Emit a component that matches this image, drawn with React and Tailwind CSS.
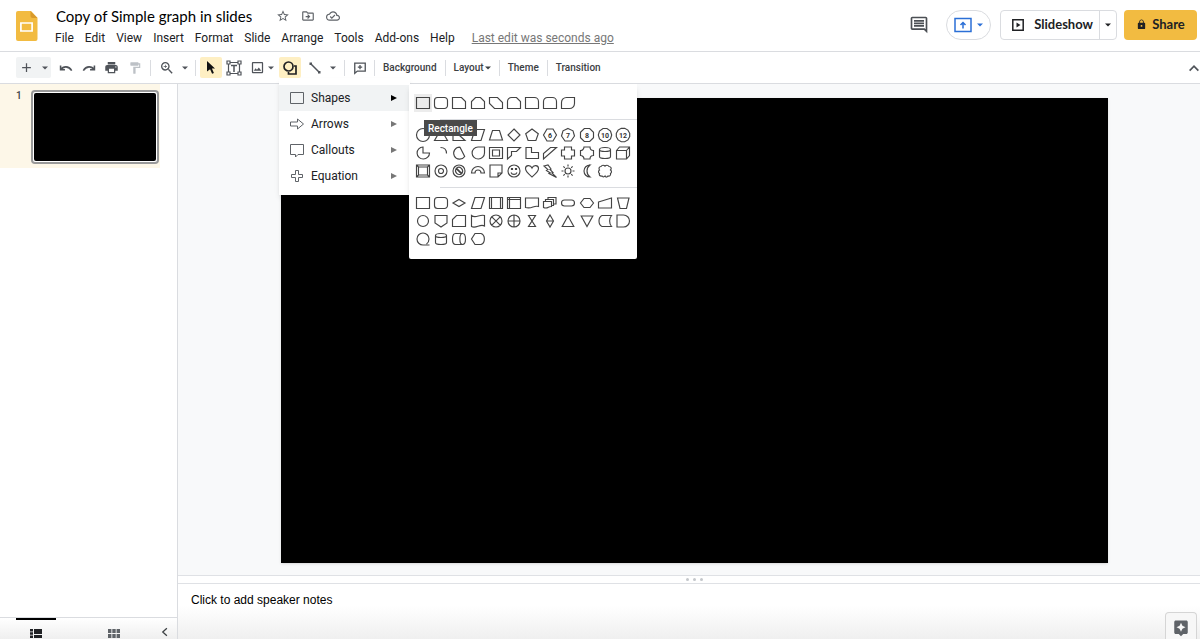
import React, { useState } from 'react';
import {
  MdAdd,
  MdAssistant,
  MdFormatPaint,
  MdLock,
  MdOutlineCloudDone,
  MdOutlineDriveFileMove,
  MdOutlineImage,
  MdOutlineInsertComment,
  MdPrint,
  MdStarBorder,
  MdZoomIn
} from 'react-icons/md';

const MENUS = ['File', 'Edit', 'View', 'Insert', 'Format', 'Slide', 'Arrange', 'Tools', 'Add-ons', 'Help'];

const RECT = 'M2.5 3.5h13v11h-13z';
const ROUND_RECT = 'M5.5 3.5h7a3 3 0 0 1 3 3v5a3 3 0 0 1-3 3h-7a3 3 0 0 1-3-3v-5a3 3 0 0 1 3-3z';
const PARALLELOGRAM = 'M6 3.5h9.5l-3.5 11H2.5z';
const CIRCLE = 'M9 3a6 6 0 1 1 0 12a6 6 0 0 1 0-12z';
const OCTAGON = 'M6.3 2.5h5.4l3.8 3.8v5.4l-3.8 3.8H6.3l-3.8-3.8V6.3z';
const CAN = 'M3.5 5.5c0-2.7 11-2.7 11 0v7c0 2.7-11 2.7-11 0zM3.5 5.5c0 2.7 11 2.7 11 0';

// Each entry: [name, outline, optional number drawn inside]
const SHAPE_GROUPS = [
  [
    ['Rectangle', RECT],
    ['Rounded rectangle', ROUND_RECT],
    ['Snip single corner', 'M2.5 3.5h9l4 4v7h-13z'],
    ['Snip same-side corners', 'M6.5 3.5h5l4 4v7h-13v-7z'],
    ['Snip diagonal corners', 'M2.5 3.5h8l5 5v6h-8l-5-5z'],
    ['Snip and round corner', 'M6.5 3.5h5l4 4v7h-13v-7a4 4 0 0 1 4-4z'],
    ['Round single corner', 'M2.5 3.5h9a4 4 0 0 1 4 4v7h-13z'],
    ['Round same-side corners', 'M6.5 3.5h5a4 4 0 0 1 4 4v7h-13v-7a4 4 0 0 1 4-4z'],
    ['Round diagonal corners', 'M7.5 3.5h8v6a5 5 0 0 1-5 5h-8v-6a5 5 0 0 1 5-5z']
  ],
  [
    ['Ellipse', 'M9 2.5a6.5 6.5 0 1 1 0 13a6.5 6.5 0 0 1 0-13z'],
    ['Triangle', 'M9 3.5l6.5 11h-13z'],
    ['Right triangle', 'M3 3.5l12 11H3z'],
    ['Parallelogram', PARALLELOGRAM],
    ['Trapezoid', 'M5.500 4.500h7l3 9.500h-13z'],
    ['Diamond', 'M9 3l6 6l-6 6l-6-6z'],
    ['Pentagon', 'M9 3l6.3 4.7l-2.4 6.800H5.100L2.700 7.700z'],
    ['Hexagon', 'M6 3h6l3.500 6l-3.500 6H6L2.500 9z', '6'],
    ['Heptagon', 'M9 2.500l5 2.300l1.500 5.200l-3.500 5H6l-3.500-5l1.500-5.200z', '7'],
    ['Octagon', OCTAGON, '8'],
    ['Decagon', 'M7 2.500h4l3.500 2.500l1.200 4l-1.200 4L11 15.500H7L3.500 13L2.300 9l1.200-4z', '10'],
    ['Dodecagon', 'M7.300 2.300h3.400l3.200 1.800l1.800 3.200v3.400l-1.800 3.200l-3.200 1.800H7.300l-3.200-1.800l-1.800-3.200V7.300l1.800-3.200z', '12'],
    ['Pie', 'M9 3v6h6.500a6.2 6 0 1 1-6.5-6z'],
    ['Arc', 'M8.500 3.500c4 0 6 2.500 6 6'],
    ['Chord', 'M10 3.200l4.700 9.300A6 6 0 1 1 10 3.200z'],
    ['Teardrop', 'M9 3h6.500v6a6.200 6 0 1 1-6.500-6z'],
    ['Frame', 'M2.500 3.500h13v11h-13zM5.500 6h7v6h-7z'],
    ['Half frame', 'M2.500 3.500h13l-4 4h-5v4l-4 3.500z'],
    ['L-shape', 'M3 3.500h5.500v5h7v6H3z'],
    ['Diagonal stripe', 'M9.500 3.500h6l-13 11.500V9.500z'],
    ['Cross', 'M5.500 3h7v3h3v6h-3v3h-7v-3h-3V6h3z'],
    ['Plaque', 'M6 3h6a3.500 3.500 0 0 0 3.500 3.500v5A3.500 3.500 0 0 0 12 15H6a3.500 3.500 0 0 0-3.500-3.500v-5A3.500 3.500 0 0 0 6 3z'],
    ['Can', CAN],
    ['Cube', 'M2.500 6.500l3-3.500h10v8.500l-3 3.500h-10zM2.500 6.500h10v8.500M12.500 6.500l3-3.500'],
    ['Bevel', 'M2.500 3h13v12h-13zM4.500 5h9v8h-9zM2.500 3l2 2M15.500 3l-2 2M2.500 15l2-2M15.500 15l-2-2'],
    ['Donut', CIRCLE + 'M9 6.500a2.500 2.500 0 1 1 0 5a2.500 2.500 0 0 1 0-5z'],
    ['No symbol', CIRCLE + 'M6.500 6.100a3.800 3.800 0 0 1 5.400 5.200zM6.100 6.700a3.800 3.800 0 0 0 5.200 5.200z'],
    ['Block arc', 'M2.500 11a6.500 6.500 0 0 1 13 0h-3.500a3 3 0 0 0-6 0z'],
    ['Folded corner', 'M3 3h12v8l-4 4H3zM11 15v-4h4'],
    ['Smiley face', CIRCLE + 'M6 10.500c1 2.500 5 2.500 6 0M6.500 6.500h1v1h-1zM10.500 6.500h1v1h-1z'],
    ['Heart', 'M9 15C5 11.500 2.500 9.500 2.500 6.500C2.500 3 7.500 2.500 9 6c1.500-3.500 6.500-3 6.500.5c0 3-2.500 5-6.500 8.500z'],
    ['Lightning bolt', 'M3 4l4-1l3 4l-1 .5l3 3l-1 .5l4.500 4.500l-7.500-4l1.300-.6l-3.800-2.400l1.400-.8z'],
    ['Sun', 'M9 6a3 3 0 1 1 0 6a3 3 0 0 1 0-6zM9 2.500v2M9 13.500v2M2.500 9h2M13.500 9h2M4.400 4.400l1.400 1.400M13.600 4.400l-1.400 1.400M4.400 13.600l1.400-1.400M13.600 13.600l-1.400-1.400'],
    ['Moon', 'M12 3a6 6 0 1 0 0 12a7.500 7.500 0 0 1 0-12z'],
    ['Cloud', 'M5 4.500c1-1.700 3-1.500 4-.3c1-1.200 3-1.400 4 .3c2 0 3 2 1.500 3.500c1.300 1 1.300 2.500 0 3.500c.5 2-1 3-2.500 2.500c-1 1.500-2.500 1.300-3 0c-1 1.300-2.500 1-3 0c-2 .5-3.200-1-2.500-2.500c-1.300-1-1.300-2.500 0-3.500C2.500 6.500 3 4.500 5 4.500z']
  ],
  [
    ['Process', RECT],
    ['Alternate process', ROUND_RECT],
    ['Decision', 'M9 5.500l6 3.500l-6 3.500L3 9z'],
    ['Data', PARALLELOGRAM],
    ['Predefined process', RECT + 'M4.500 3.500v11M13.500 3.500v11'],
    ['Internal storage', RECT + 'M4.500 3.500v11M2.500 5.500h13'],
    ['Document', 'M2.500 4h13v8.500c-5-1.500-6.500 3-13 1z'],
    ['Multi-document', 'M2.500 7.500h8v5c-3-.5-4 3-8 1zM4.500 7.500v-2h8v6h-2M7 5.500v-2h8v6.500h-2.500'],
    ['Terminator', 'M5.500 6h7a3 3 0 0 1 0 6h-7a3 3 0 0 1 0-6z'],
    ['Preparation', 'M6 4.500h6L15.500 9L12 13.500H6L2.500 9z'],
    ['Manual input', 'M2.500 8l13-4v10h-13z'],
    ['Manual operation', 'M3.500 4h11.500l-2.500 10.500H6z'],
    ['Connector', 'M9 3.500a5.500 5.500 0 1 1 0 11a5.500 5.500 0 0 1 0-11z'],
    ['Off-page connector', 'M3 3.500h12V11l-6 4l-6-4z'],
    ['Card', 'M6.500 3.500h9v11h-13v-7z'],
    ['Punched tape', 'M2.500 3.500c4 3.500 8-1.500 13 0v10.500c-4.500-2.500-8.500 3-13 .5z'],
    ['Summing junction', CIRCLE + 'M4.800 4.800l8.400 8.400M13.200 4.800l-8.400 8.400'],
    ['Or', CIRCLE + 'M9 3v12M3 9h12'],
    ['Collate', 'M5.500 3.500h7l-7 11h7z'],
    ['Sort', 'M9 3l3.500 6L9 15L5.500 9zM5.500 9h7'],
    ['Extract', 'M9 4l5.800 10.500H3.200z'],
    ['Merge', 'M3.200 4h11.600L9 14.500z'],
    ['Stored data', 'M6 3.500h9.500c-2.500 3-2.500 8 0 11H6c-4-2-4-9 0-11z'],
    ['Delay', 'M3 3h6.500a6 6 0 0 1 0 12H3z'],
    ['Sequential access storage', 'M15.500 15H9a6 6 0 1 1 6-6c0 2-1 4-2.500 5'],
    ['Magnetic disk', CAN],
    ['Direct access storage', 'M5.500 3.500h7c4 0 4 11 0 11h-7c-4 0-4-11 0-11zM12.500 3.500c-3.500 0-3.500 11 0 11'],
    ['Display', 'M6 3.500h6c4.500 1.500 4.500 9.500 0 11H6L2.500 9z']
  ]
];

const SUBMENUS = [
  { label: 'Shapes', path: 'M1.5 3.5h13v11h-13z' },
  { label: 'Arrows', path: 'M1.5 7h7V4l6 5l-6 5v-3h-7z' },
  { label: 'Callouts', path: 'M1.5 3.5h13v10H9L6.500 16v-2.500h-5z' },
  { label: 'Equation', path: 'M6.5 3.5h3v4h4v3h-4v4h-3v-4h-4v-3h4z' }
];

const Caret = ({ className = '' }) => (
  <svg viewBox="0 0 6 4" className={`w-[6px] h-[4px] shrink-0 fill-current ${className}`}>
    <path d="M0 .5h6L3 3.5z" />
  </svg>
);

const Divider = () => <div className="w-px h-4 mx-1 bg-[#dadce0]" />;

const ToolButton = ({ label, className = 'w-[23px]', children }) => (
  <button
    type="button"
    aria-label={label}
    className={`h-[21px] shrink-0 flex items-center justify-center rounded-xs ${className}`}
  >
    {children}
  </button>
);

const TextButton = ({ children }) => (
  <button type="button" className="h-[21px] px-1 flex items-center gap-px text-[10px] font-medium text-[#3c4043]">
    {children}
  </button>
);

const Stroke = ({ d, className = 'size-4', width = 1.5 }) => (
  <svg viewBox="0 0 16 16" className={`${className} shrink-0`} fill="none" stroke="currentColor" strokeWidth={width}>
    <path d={d} />
  </svg>
);

const Header = () => {
  const [title, setTitle] = useState('Copy of Simple graph in slides');

  return (
    <header className="h-[52px] shrink-0 flex items-center border-b border-[#dadce0] pl-4 pr-[3px]">
      <a href="#home" aria-label="Slides home" className="shrink-0">
        <svg viewBox="0 0 22 30" className="w-[22px] h-[30px]">
          <path d="M2 0h13l6.500 7v21a2 2 0 0 1-2 2H2a2 2 0 0 1-2-2V2a2 2 0 0 1 2-2z" fill="#f2bb41" />
          <path d="M14.500 0l7 7h-5a2 2 0 0 1-2-2z" fill="#d99a2b" />
          <path d="M4.900 12h11.200v8H4.900z" fill="none" stroke="#fff" strokeWidth="1.7" />
        </svg>
      </a>

      <div className="flex-1 min-w-0 h-full pt-[5px] pl-[13px]">
        <div className="flex items-center h-[22px] pl-[5px] text-[#5f6368]">
          <input
            aria-label="Document title"
            value={title}
            onChange={(e) => setTitle(e.target.value)}
            className="field-sizing-content text-[15px] leading-[22px] text-black font-['Lato',sans-serif] outline-none"
          />
          <div className="flex items-center gap-[11px] pl-6">
            <button type="button" aria-label="Star"><MdStarBorder size={14} /></button>
            <button type="button" aria-label="Move"><MdOutlineDriveFileMove size={14} /></button>
            <button type="button" aria-label="Document status"><MdOutlineCloudDone size={14} /></button>
          </div>
        </div>
        <nav className="flex items-center gap-[11px] h-[22px] pl-1 text-[12px] text-[#202124] whitespace-nowrap">
          {MENUS.map((menu) => (
            <button key={menu} type="button">{menu}</button>
          ))}
          <a href="#history" className="pl-[6px] text-[#777] underline">Last edit was seconds ago</a>
        </nav>
      </div>

      <div className="flex items-center shrink-0 h-[30px] mb-[2px] font-['Lato',sans-serif] text-[13px] font-bold text-[#202124]">
        <button type="button" aria-label="Comment history" className="mr-[17px] text-[#4b4f54]">
          <MdOutlineInsertComment size={20} />
        </button>
        <button
          type="button"
          aria-label="Present to a meeting"
          className="h-[30px] w-[45px] mr-[9px] flex items-center justify-center gap-[5px] rounded-full border border-[#dadce0] text-[#2b6fd6]"
        >
          <svg viewBox="0 0 18 16" className="w-[18px] h-4" fill="none" stroke="currentColor" strokeWidth="1.5">
            <path d="M1 1.500h16v13H1z" />
            <path d="M9 11.500V6M6.500 8L9 5.500L11.500 8" />
          </svg>
          <Caret />
        </button>
        <div className="flex h-[30px] mr-[7px] rounded border border-[#dadce0]">
          <button type="button" className="flex items-center gap-[10px] pl-[11px] pr-[6px]">
            <svg viewBox="0 0 12 12" className="size-3" fill="none" stroke="currentColor" strokeWidth="1.5">
              <path d="M.8.8h10.400v10.400H.8z" />
              <path d="M4.500 3.500v5L8.500 6z" fill="currentColor" stroke="none" />
            </svg>
            Slideshow
          </button>
          <button type="button" aria-label="Slideshow options" className="w-[17px] flex items-center justify-center border-l border-[#dadce0]">
            <Caret />
          </button>
        </div>
        <button type="button" className="h-[30px] w-[73px] flex items-center justify-center gap-[5px] rounded bg-[#f2bb41]">
          <MdLock size={11} />
          Share
        </button>
      </div>
    </header>
  );
};

const ShapeIcon = ({ d, text }) => (
  <svg viewBox="0 0 18 18" className="size-[18px] shrink-0" fill="none" stroke="#444" strokeWidth="1.15">
    <path d={d} />
    {text && (
      <text
        x="9"
        y="11.5"
        textAnchor="middle"
        fontSize="7"
        fontWeight="700"
        fill="#333"
        stroke="none"
      >
        {text}
      </text>
    )}
  </svg>
);

const ShapePalette = () => (
  <div className="absolute left-full -top-px -ml-px w-[228px] pt-[10px] pb-[11px] rounded-b-xs bg-white shadow-md cursor-default">
    {SHAPE_GROUPS.map((group, i) => (
      <React.Fragment key={i}>
        {i > 0 && <div className="h-px ml-[31px] mt-[7px] mb-[6px] bg-[#dadce0]" />}
        <div className="grid grid-cols-12 px-[5px]">
          {group.map(([name, d, text]) => (
            <button
              key={name}
              type="button"
              aria-label={name}
              className={`relative h-[18px] flex items-center justify-center ${name === 'Rectangle' ? 'bg-[#ececec]' : ''}`}
            >
              <ShapeIcon d={d} text={text} />
              {name === 'Rectangle' && (
                <span
                  role="tooltip"
                  className="absolute left-[10px] top-[26px] z-10 px-1 h-4 flex items-center bg-[#4a4a4a] text-white text-[10px] font-medium"
                >
                  Rectangle
                </span>
              )}
            </button>
          ))}
        </div>
      </React.Fragment>
    ))}
  </div>
);

const ShapeMenu = () => {
  const [open, setOpen] = useState('Shapes');

  return (
    <ul className="absolute left-0 top-full w-[131px] pt-[7px] pb-[6px] bg-white shadow-md">
      {SUBMENUS.map(({ label, path }) => (
        <li key={label} className="relative">
          <button
            type="button"
            aria-expanded={open === label}
            onClick={() => setOpen(label)}
            className={`w-full h-[26px] flex items-center pl-[10px] pr-[13px] text-[12px] text-[#202124] ${open === label ? 'bg-[#f1f3f4]' : ''}`}
          >
            <svg viewBox="0 0 16 18" className="w-4 h-[18px] mr-[6px]" fill="none" stroke="#5f6368">
              <path d={path} />
            </svg>
            {label}
            <svg viewBox="0 0 6 6" className={`size-[6px] ml-auto ${open === label ? 'fill-black' : 'fill-[#777]'}`}>
              <path d="M0 0l6 3l-6 3z" />
            </svg>
          </button>
          {label === 'Shapes' && open === label && <ShapePalette />}
        </li>
      ))}
    </ul>
  );
};

const Toolbar = () => (
  <div className="relative z-20 h-8 shrink-0 flex items-center border-b border-[#dadce0] pl-4 text-[#50545a]">
    <ToolButton label="New slide" className="w-[35px] mr-[3px] gap-2 bg-[#f1f3f4]">
      <MdAdd size={15} />
      <Caret />
    </ToolButton>
    <ToolButton label="Undo">
      <Stroke d="M1.800 5v5h5M2 10c3-4.500 9-4.500 12.500 1" width={1.8} className="size-[14px]" />
    </ToolButton>
    <ToolButton label="Redo">
      <Stroke d="M14.200 5v5h-5M14 10c-3-4.500-9-4.500-12.500 1" width={1.8} className="size-[14px]" />
    </ToolButton>
    <ToolButton label="Print"><MdPrint size={15} /></ToolButton>
    <ToolButton label="Paint format"><MdFormatPaint size={14} className="text-[#bdc1c6]" /></ToolButton>
    <Divider />
    <ToolButton label="Zoom in"><MdZoomIn size={16} /></ToolButton>
    <ToolButton label="Zoom level" className="w-[13px]"><Caret /></ToolButton>
    <Divider />
    <ToolButton label="Select" className="w-[22px] bg-[#feefc3]">
      <svg viewBox="0 0 8 13" className="w-2 h-[13px]">
        <path d="M0 0l8 7.500H4.900l2 4.500l-1.800.8l-2-4.600L0 10.500z" fill="#111" />
      </svg>
    </ToolButton>
    <ToolButton label="Text box">
      <svg viewBox="0 0 16 16" className="size-4" fill="none" stroke="currentColor" strokeWidth="1.2">
        <path d="M2.500 2.500h11v11h-11z" />
        <path d="M1 1h3v3H1zM12 1h3v3h-3zM1 12h3v3H1zM12 12h3v3h-3z" fill="#fff" />
        <path d="M5 5.500h6M8 5.500V12" strokeWidth="1.5" />
      </svg>
    </ToolButton>
    <ToolButton label="Insert image" className="w-[34px] gap-[3px]">
      <MdOutlineImage size={15} />
      <Caret />
    </ToolButton>
    <div className="relative">
      <ToolButton label="Shape" className="w-[22px] bg-[#feefc3]">
        <svg viewBox="0 0 14 14" className="size-[14px]" fill="none" stroke="#202124" strokeWidth="1.7">
          <circle cx="5.500" cy="5.500" r="4.500" />
          <path d="M11 5h2v8H5.500v-2" />
        </svg>
      </ToolButton>
      <ShapeMenu />
    </div>
    <ToolButton label="Line" className="w-[39px] gap-[9px] pl-1">
      <svg viewBox="0 0 12 12" className="size-3" fill="currentColor" stroke="currentColor">
        <path d="M1.500 1.500l9 9" strokeWidth="1.5" />
        <path d="M.5.5h2.500v2.500H.5zM9 9h2.500v2.500H9z" stroke="none" />
      </svg>
      <Caret />
    </ToolButton>
    <Divider />
    <ToolButton label="Add comment" className="w-[21px]">
      <Stroke d="M2 2.500h12v9H5L2 14zM8 4.500v5M5.500 7h5" className="size-[14px]" />
    </ToolButton>
    <Divider />
    <TextButton><span>Background</span></TextButton>
    <Divider />
    <TextButton><span>Layout</span><Caret /></TextButton>
    <Divider />
    <TextButton><span>Theme</span></TextButton>
    <Divider />
    <TextButton><span>Transition</span></TextButton>
    <ToolButton label="Hide the menus" className="w-[13px] ml-auto">
      <Stroke d="M3 11l5-5l5 5" width={2} className="size-[14px]" />
    </ToolButton>
  </div>
);

const Filmstrip = () => (
  <aside className="w-[178px] shrink-0 flex flex-col border-r border-[#dadce0]">
    <div className="flex-1">
      <button type="button" aria-label="Slide 1" className="w-40 h-[84px] flex items-start pl-4 pt-[6px] bg-[#fdf7e8]">
        <span className="w-[15px] text-left text-[10px] leading-3 font-medium text-[#3c4043]">1</span>
        <span className="block w-32 h-[74px] p-px rounded border-2 border-[#999] bg-white">
          <span className="block h-full rounded-xs bg-black" />
        </span>
      </button>
    </div>
    <div className="h-[22px] shrink-0 flex items-start border-t border-[#dadce0] bg-linear-to-b from-white to-[#efefef] pl-4">
      <button type="button" aria-label="Filmstrip view" className="w-10 h-5 flex justify-center items-end border-t-2 border-black">
        <svg viewBox="0 0 12 9" className="w-3 h-[9px]" fill="#202124">
          <path d="M0 0h3v2.500H0zM0 3.300h3v2.400H0zM0 6.500h3V9H0zM4 0h8v5H4zM4 6h8v3H4z" />
        </svg>
      </button>
      <button type="button" aria-label="Grid view" className="w-10 ml-[38px] h-5 flex justify-center items-end">
        <svg viewBox="0 0 12 9" className="w-3 h-[9px]" fill="#5f6368">
          <path d="M0 0h3.400v4H0zM4.300 0h3.400v4H4.300zM8.600 0H12v4H8.600zM0 5h3.400v4H0zM4.300 5h3.400v4H4.300zM8.600 5H12v4H8.600z" />
        </svg>
      </button>
      <button type="button" aria-label="Hide filmstrip" className="ml-auto mr-[6px] mt-2 text-[#3c4043]">
        <Stroke d="M10.500 3L5 8l5.500 5" width={1.7} className="size-3" />
      </button>
    </div>
  </aside>
);

const Workspace = () => {
  const [notes, setNotes] = useState('');

  return (
    <main className="relative flex-1 min-w-0 flex flex-col">
      <div className="flex-1 min-h-0 flex justify-center bg-[#f8f9fa] pl-[11px] pt-[14px] pb-[12px]">
        <div className="h-full aspect-video bg-black shadow-sm" />
      </div>
      <div className="h-[9px] shrink-0 flex items-center justify-center gap-1 pl-[11px] border-y border-[#dfe1e5] bg-white">
        <span className="size-[3px] rounded-full bg-[#c4c7cb]" />
        <span className="size-[3px] rounded-full bg-[#c4c7cb]" />
        <span className="size-[3px] rounded-full bg-[#c4c7cb]" />
      </div>
      <div className="h-[55px] shrink-0 bg-linear-to-b from-white from-40% to-[#efefef]">
        <textarea
          aria-label="Speaker notes"
          placeholder="Click to add speaker notes"
          value={notes}
          onChange={(e) => setNotes(e.target.value)}
          className="block w-full h-full resize-none pl-[13px] pt-2 text-[12px] leading-4 text-black placeholder:text-black font-['Liberation_Sans',Arial,sans-serif] outline-none"
        />
      </div>
      <button
        type="button"
        aria-label="Explore"
        className="absolute right-[3px] bottom-0 w-8 h-[27px] flex justify-center pt-[6px] rounded-t border border-b-0 border-[#d5d5d5] bg-[#f7f7f7] text-[#5f6368]"
      >
        <MdAssistant size={18} />
      </button>
    </main>
  );
};

const App = () => (
  <div className="h-screen flex flex-col overflow-hidden bg-white font-['Roboto',sans-serif]">
    <Header />
    <Toolbar />
    <div className="flex-1 min-h-0 flex">
      <Filmstrip />
      <Workspace />
    </div>
  </div>
);

export default App;
